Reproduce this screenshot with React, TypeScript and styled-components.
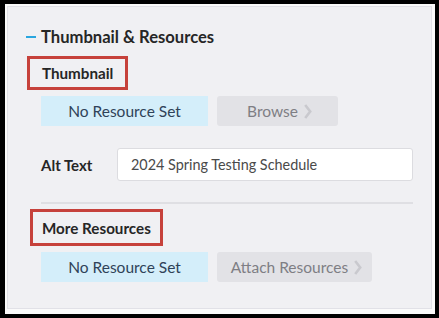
import React from "react";
import styled, { createGlobalStyle } from "styled-components";

const Global = createGlobalStyle`
  html, body { margin: 0; padding: 0; background: #000; }
  body { font-family: Lato, "Open Sans", sans-serif; }
  * { box-sizing: border-box; }
`;

const Frame = styled.div`
  margin: 4px 4px 0 5px;
  width: 430px;
  height: 310px;
  background: #fafafa;
  padding: 2px 3px 5px 2px;
`;

const Panel = styled.div`
  height: 100%;
  background: #f0f0f3;
  border: 1px solid #e1e1e7;
  padding: 20px 18px 0 33px;
  display: flex;
  flex-direction: column;
`;

const Header = styled.div`
  display: flex;
  align-items: center;
  gap: 5px;
  margin-left: -15px;
  height: 20px;
  font-size: 16.6px;
  font-weight: 700;
  color: #262626;
`;

const Dash = styled.span`
  width: 10px;
  height: 2px;
  background: #2aa6df;
`;

const Marked = styled.div<{ $pad: number; $shift: number; $top: number; $h: number }>`
  align-self: flex-start;
  display: flex;
  align-items: center;
  height: ${(p) => p.$h}px;
  margin-left: ${(p) => p.$shift}px;
  margin-top: ${(p) => p.$top}px;
  border: 3px solid #c6413b;
  padding: 0 ${(p) => p.$pad}px;
  font-size: 15.2px;
  font-weight: 700;
  color: #262626;
`;

const Row = styled.div<{ $top: number }>`
  display: flex;
  align-items: center;
  gap: 9px;
  margin-top: ${(p) => p.$top}px;
`;

const Status = styled.div`
  width: 167px;
  height: 30px;
  background: #d4eefa;
  color: #2f4258;
  font-size: 15.5px;
  display: flex;
  align-items: center;
  justify-content: center;
`;

const Action = styled.button<{ $w: number }>`
  width: ${(p) => p.$w}px;
  height: 30px;
  border: none;
  border-radius: 3px;
  background: #e2e2e6;
  color: #7e7e84;
  font-family: inherit;
  font-size: 15.5px;
  display: flex;
  align-items: center;
  justify-content: center;
  gap: 6px;
  padding: 0 0 0 4px;
`;

const FieldLabel = styled.label`
  width: 67px;
  font-size: 15px;
  font-weight: 700;
  color: #262626;
`;

const Input = styled.input`
  flex: 1;
  height: 33px;
  border: 1px solid #dcdce0;
  border-radius: 3px;
  background: #fff;
  padding: 0 13px;
  font-family: inherit;
  font-size: 14.4px;
  color: #4a4a4a;
  outline: none;
`;

const Divider = styled.hr`
  margin: 21px 0 0;
  border: none;
  height: 2px;
  background: #dfdfe3;
`;

const Chevron = () => (
  <svg width="8" height="15" viewBox="0 0 8 15">
    <path d="M1.2 1 L6.2 7.5 L1.2 14" fill="none" stroke="#c9c9ce" strokeWidth="2.6" />
  </svg>
);

export default function App() {
  return (
    <>
      <Global />
      <Frame>
        <Panel>
          <Header>
            <Dash />
            <span>Thumbnail &amp; Resources</span>
          </Header>
          <Marked $pad={12} $shift={-14} $top={9} $h={34}>Thumbnail</Marked>
          <Row $top={6}>
            <Status>No Resource Set</Status>
            <Action $w={121}>
              Browse <Chevron />
            </Action>
          </Row>
          <Row $top={22}>
            <FieldLabel>Alt Text</FieldLabel>
            <Input defaultValue="2024 Spring Testing Schedule" />
          </Row>
          <Divider />
          <Marked $pad={9} $shift={-11} $top={5} $h={37}>More Resources</Marked>
          <Row $top={6}>
            <Status>No Resource Set</Status>
            <Action $w={155}>
              Attach Resources <Chevron />
            </Action>
          </Row>
        </Panel>
      </Frame>
    </>
  );
}
